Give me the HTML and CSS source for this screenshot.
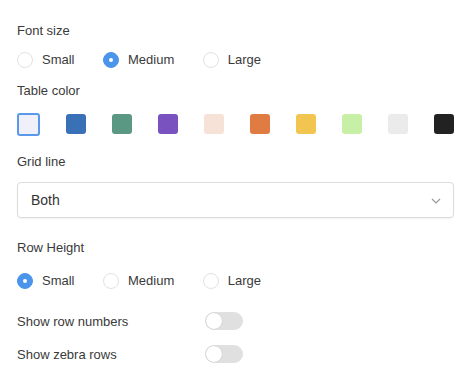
FILE: index.html
```html
<!DOCTYPE html>
<html lang="en">
<head>
    <meta charset="UTF-8">
    <meta name="viewport" content="width=device-width, initial-scale=1.0">
    <title>Table settings</title>
    <link rel="stylesheet" href="styles.css">
</head>
<body>
    <div class="settings">
        <div class="label">Font size</div>
        <div class="radios radios-font">
            <label class="radio"><span class="dot"></span>Small</label>
            <label class="radio"><span class="dot checked"></span>Medium</label>
            <label class="radio"><span class="dot"></span>Large</label>
        </div>

        <div class="label label-color">Table color</div>
        <div class="swatches">
            <span class="swatch selected" style="background: #eff0fa"></span>
            <span class="swatch" style="background: #3a70b6"></span>
            <span class="swatch" style="background: #5b9884"></span>
            <span class="swatch" style="background: #7a52c0"></span>
            <span class="swatch" style="background: #f6e2d6"></span>
            <span class="swatch" style="background: #e07b44"></span>
            <span class="swatch" style="background: #f1c54f"></span>
            <span class="swatch" style="background: #c7efa6"></span>
            <span class="swatch" style="background: #ebebeb"></span>
            <span class="swatch" style="background: #222222"></span>
        </div>

        <div class="label label-grid">Grid line</div>
        <div class="select">
            <span>Both</span>
            <svg class="chevron" width="10" height="6" viewBox="0 0 10 6">
                <path d="M1 1 L5 5 L9 1" fill="none" stroke="#999" stroke-width="1.2"/>
            </svg>
        </div>

        <div class="label label-row">Row Height</div>
        <div class="radios radios-row">
            <label class="radio"><span class="dot checked"></span>Small</label>
            <label class="radio"><span class="dot"></span>Medium</label>
            <label class="radio"><span class="dot"></span>Large</label>
        </div>

        <div class="toggle-row first">
            <span>Show row numbers</span>
            <span class="toggle"><span class="knob"></span></span>
        </div>
        <div class="toggle-row">
            <span>Show zebra rows</span>
            <span class="toggle"><span class="knob"></span></span>
        </div>
    </div>
</body>
</html>
```

FILE: styles.css
```css
body {
    margin: 0;
    background: #fff;
    font-family: 'Liberation Sans', Arial, sans-serif;
    font-size: 13px;
    color: #3a3a3a;
}

.settings {
    width: 437px;
    padding: 23px 20px 0 17px;
    display: flex;
    flex-direction: column;
}

.label {
    line-height: 16px;
    height: 16px;
}

.label-color { margin-top: 15px; }
.label-grid { margin-top: 18px; }
.label-row { margin-top: 22px; }

/* Radio groups */
.radios {
    display: flex;
    align-items: center;
    gap: 28.5px;
    height: 16px;
}

.radios-font { margin-top: 13px; }
.radios-row { margin-top: 17px; }

.radio {
    display: flex;
    align-items: center;
    gap: 9px;
    line-height: 16px;
}

.dot {
    width: 16px;
    height: 16px;
    box-sizing: border-box;
    border-radius: 50%;
    border: 1px solid #e2e2e2;
    background: #fff;
    display: flex;
    align-items: center;
    justify-content: center;
}

.dot.checked {
    background: #4a94eb;
    border-color: #4a94eb;
}

.dot.checked::after {
    content: "";
    width: 4px;
    height: 4px;
    border-radius: 50%;
    background: #fff;
}

/* Colour swatches */
.swatches {
    margin-top: 13px;
    display: flex;
    justify-content: space-between;
    align-items: center;
    height: 24px;
}

.swatch {
    width: 20px;
    height: 20px;
    border-radius: 3px;
}

.swatch.selected {
    width: 23px;
    height: 23px;
    box-sizing: border-box;
    border: 2px solid #5a98ea;
}

/* Select box */
.select {
    margin-top: 12px;
    height: 36px;
    box-sizing: border-box;
    border: 1px solid #dcdcdc;
    border-radius: 4px;
    box-shadow: 0 1px 2px rgba(0, 0, 0, 0.06);
    display: flex;
    align-items: center;
    justify-content: space-between;
    padding: 0 12px 0 13px;
    font-size: 14px;
    color: #333;
}

.chevron {
    margin-top: 1px;
}

/* Toggles */
.toggle-row {
    display: grid;
    grid-template-columns: 188px auto;
    align-items: center;
    height: 18px;
    margin-top: 15px;
}

.toggle-row.first { margin-top: 23px; }

.toggle {
    width: 38px;
    height: 18px;
    border-radius: 9px;
    background: #e0e0e0;
    display: flex;
    align-items: center;
    padding-left: 1px;
    box-sizing: border-box;
}

.knob {
    width: 16px;
    height: 16px;
    border-radius: 50%;
    background: #fff;
    box-shadow: 0 0 1px rgba(0, 0, 0, 0.25);
}
```
